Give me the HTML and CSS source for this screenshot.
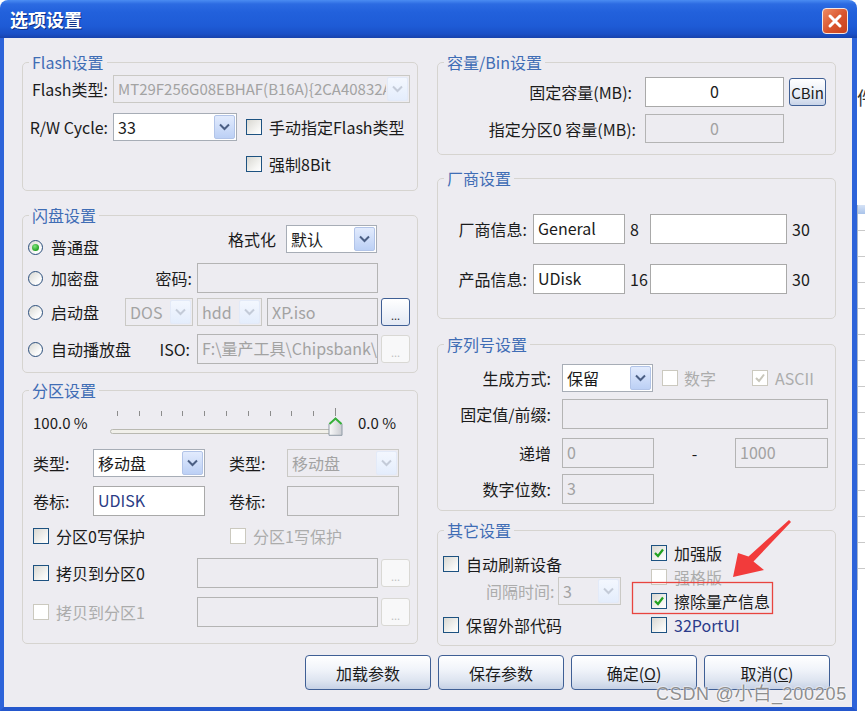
FILE: index.html
```html
<!DOCTYPE html>
<html lang="zh-CN">
<head>
    <meta charset="UTF-8">
    <title>选项设置</title>
    <link rel="stylesheet" href="styles.css">
</head>
<body>
    <div class="window">
        <div class="titlebar">
            <span class="title">选项设置</span>
            <span class="close">
                <svg width="24" height="24" viewBox="0 0 24 24"><path d="M7 7 L17 17 M17 7 L7 17" stroke="#fff" stroke-width="3" stroke-linecap="round"/></svg>
            </span>
        </div>
        <div class="client">
            <div class="panes">
                <div class="col left">
                    <fieldset class="grp flash">
                        <legend>Flash设置</legend>
                        <div class="row fl-r1">
                            <span class="lbl fl-lbl">Flash类型:</span>
                            <div class="combo off fl-type"><span class="val">MT29F256G08EBHAF(B16A){2CA40832A</span><span class="arrow"><svg width="11" height="8" viewBox="0 0 11 8"><polyline points="1,1.5 5.5,6 10,1.5" fill="none" stroke-width="2"/></svg></span></div>
                        </div>
                        <div class="row fl-r2">
                            <span class="lbl fl-lbl">R/W Cycle:</span>
                            <div class="combo fl-cycle"><span class="val">33</span><span class="arrow"><svg width="11" height="8" viewBox="0 0 11 8"><polyline points="1,1.5 5.5,6 10,1.5" fill="none" stroke-width="2"/></svg></span></div>
                            <label class="chk fl-manual"><span class="box"></span>手动指定Flash类型</label>
                        </div>
                        <div class="row fl-r3">
                            <label class="chk"><span class="box"></span>强制8Bit</label>
                        </div>
                    </fieldset>

                    <fieldset class="grp disk">
                        <legend>闪盘设置</legend>
                        <div class="row dk-r1">
                            <label class="opt dk-first"><span class="radio on"></span>普通盘</label>
                            <span class="lbl dk-fmt">格式化</span>
                            <div class="combo dk-fmtbox"><span class="val">默认</span><span class="arrow"><svg width="11" height="8" viewBox="0 0 11 8"><polyline points="1,1.5 5.5,6 10,1.5" fill="none" stroke-width="2"/></svg></span></div>
                        </div>
                        <div class="row dk-r2">
                            <label class="opt dk-wide"><span class="radio"></span>加密盘</label>
                            <span class="lbl dk-pwd">密码:</span>
                            <div class="field off dk-path"></div>
                        </div>
                        <div class="row dk-r3">
                            <label class="opt dk-boot"><span class="radio"></span>启动盘</label>
                            <div class="combo off dk-dos"><span class="val">DOS</span><span class="arrow"><svg width="11" height="8" viewBox="0 0 11 8"><polyline points="1,1.5 5.5,6 10,1.5" fill="none" stroke-width="2"/></svg></span></div>
                            <div class="combo off dk-hdd"><span class="val">hdd</span><span class="arrow"><svg width="11" height="8" viewBox="0 0 11 8"><polyline points="1,1.5 5.5,6 10,1.5" fill="none" stroke-width="2"/></svg></span></div>
                            <div class="field off dk-iso">XP.iso</div>
                            <span class="dots">...</span>
                        </div>
                        <div class="row dk-r4">
                            <label class="opt dk-wide"><span class="radio"></span>自动播放盘</label>
                            <span class="lbl dk-isolbl">ISO:</span>
                            <div class="field off dk-path">F:\量产工具\Chipsbank\C</div>
                            <span class="dots off">...</span>
                        </div>
                    </fieldset>

                    <fieldset class="grp part">
                        <legend>分区设置</legend>
                        <div class="row pt-slide">
                            <span class="pct">100.0 %</span>
                            <div class="slider">
                                <div class="ticks"><i></i><i></i><i></i><i></i><i></i><i></i><i></i><i></i><i></i><i></i><i class="end"></i></div>
                                <div class="track"></div>
                                <span class="thumb">
                                    <svg width="15" height="19" viewBox="0 0 15 19">
                                        <defs><linearGradient id="tg" x1="0" y1="0" x2="1" y2="0"><stop offset="0" stop-color="#fbfbfb"/><stop offset="1" stop-color="#c9cbd0"/></linearGradient></defs>
                                        <path d="M7.5 0.8 L14 6.8 V18.3 H1 V6.8 Z" fill="url(#tg)" stroke="#8f9aa6"/>
                                        <path d="M1.5 7 L7.5 1.5 L13.5 7" fill="none" stroke="#37b23a" stroke-width="2"/>
                                    </svg>
                                </span>
                            </div>
                            <span class="pct pct-end">0.0 %</span>
                        </div>
                        <div class="row pt-type">
                            <span class="pt-lbl">类型:</span>
                            <div class="combo pt-box"><span class="val">移动盘</span><span class="arrow"><svg width="11" height="8" viewBox="0 0 11 8"><polyline points="1,1.5 5.5,6 10,1.5" fill="none" stroke-width="2"/></svg></span></div>
                            <span class="pt-lbl pt-lbl2">类型:</span>
                            <div class="combo off pt-box"><span class="val">移动盘</span><span class="arrow"><svg width="11" height="8" viewBox="0 0 11 8"><polyline points="1,1.5 5.5,6 10,1.5" fill="none" stroke-width="2"/></svg></span></div>
                        </div>
                        <div class="row pt-vol">
                            <span class="pt-lbl">卷标:</span>
                            <div class="field pt-box udisk">UDISK</div>
                            <span class="pt-lbl pt-lbl2">卷标:</span>
                            <div class="field off pt-box"></div>
                        </div>
                        <div class="row pt-prot">
                            <label class="chk pt-p0"><span class="box"></span>分区0写保护</label>
                            <label class="chk off"><span class="box"></span>分区1写保护</label>
                        </div>
                        <div class="row pt-c0">
                            <label class="chk pt-copy"><span class="box"></span>拷贝到分区0</label>
                            <div class="field off dk-path"></div>
                            <span class="dots off">...</span>
                        </div>
                        <div class="row pt-c1">
                            <label class="chk off pt-copy"><span class="box"></span>拷贝到分区1</label>
                            <div class="field off dk-path"></div>
                            <span class="dots off">...</span>
                        </div>
                    </fieldset>
                </div>

                <div class="col right">
                    <fieldset class="grp cap">
                        <legend>容量/Bin设置</legend>
                        <div class="row cp-r1">
                            <span class="lbl cp-lbl1">固定容量(MB):</span>
                            <div class="field ctr cp-box">0</div>
                            <span class="mini">CBin</span>
                        </div>
                        <div class="row cp-r2">
                            <span class="lbl cp-lbl2">指定分区0 容量(MB):</span>
                            <div class="field off ctr cp-box">0</div>
                        </div>
                    </fieldset>

                    <fieldset class="grp vendor">
                        <legend>厂商设置</legend>
                        <div class="row vd-r1">
                            <span class="lbl vd-lbl">厂商信息:</span>
                            <div class="field vd-a">General</div>
                            <span class="cnt">8</span>
                            <div class="field vd-b"></div>
                            <span class="cnt">30</span>
                        </div>
                        <div class="row vd-r2">
                            <span class="lbl vd-lbl">产品信息:</span>
                            <div class="field vd-a">UDisk</div>
                            <span class="cnt">16</span>
                            <div class="field vd-b"></div>
                            <span class="cnt">30</span>
                        </div>
                    </fieldset>

                    <fieldset class="grp serial">
                        <legend>序列号设置</legend>
                        <div class="row sr-r1">
                            <span class="lbl sr-lbl">生成方式:</span>
                            <div class="combo sr-mode"><span class="val">保留</span><span class="arrow"><svg width="11" height="8" viewBox="0 0 11 8"><polyline points="1,1.5 5.5,6 10,1.5" fill="none" stroke-width="2"/></svg></span></div>
                            <label class="chk off sr-num"><span class="box"></span>数字</label>
                            <label class="chk off"><span class="box"><svg width="14" height="14" viewBox="0 0 14 14"><path d="M3 7 L6 10 L11 3.5" fill="none" stroke="#c8c6bb" stroke-width="2"/></svg></span>ASCII</label>
                        </div>
                        <div class="row sr-r2">
                            <span class="lbl sr-lbl">固定值/前缀:</span>
                            <div class="field off sr-long"></div>
                        </div>
                        <div class="row sr-r3">
                            <span class="lbl sr-lbl">递增</span>
                            <div class="field off sr-short">0</div>
                            <span class="dash">-</span>
                            <div class="field off sr-end">1000</div>
                        </div>
                        <div class="row sr-r4">
                            <span class="lbl sr-lbl">数字位数:</span>
                            <div class="field off sr-short">3</div>
                        </div>
                    </fieldset>

                    <fieldset class="grp other">
                        <legend>其它设置</legend>
                        <div class="ot-body">
                            <div class="ot-left">
                                <label class="chk ot-a"><span class="box"></span>自动刷新设备</label>
                                <div class="row ot-int">
                                    <span class="ot-lbl">间隔时间:</span>
                                    <div class="combo off ot-box"><span class="val">3</span><span class="arrow"><svg width="11" height="8" viewBox="0 0 11 8"><polyline points="1,1.5 5.5,6 10,1.5" fill="none" stroke-width="2"/></svg></span></div>
                                </div>
                                <label class="chk ot-c"><span class="box"></span>保留外部代码</label>
                            </div>
                            <div class="ot-right">
                                <label class="chk"><span class="box"><svg width="14" height="14" viewBox="0 0 14 14"><path d="M3 7 L6 10 L11 3.5" fill="none" stroke="#21a121" stroke-width="2.2"/></svg></span>加强版</label>
                                <label class="chk off"><span class="box"></span>强格版</label>
                                <label class="chk"><span class="box"><svg width="14" height="14" viewBox="0 0 14 14"><path d="M3 7 L6 10 L11 3.5" fill="none" stroke="#21a121" stroke-width="2.2"/></svg></span>擦除量产信息</label>
                                <label class="chk port"><span class="box"></span>32PortUI</label>
                            </div>
                        </div>
                    </fieldset>
                </div>
            </div>

            <div class="buttons">
                <button class="btn">加载参数</button>
                <button class="btn">保存参数</button>
                <button class="btn">确定(<u>O</u>)</button>
                <button class="btn">取消(<u>C</u>)</button>
            </div>
        </div>

        <!-- annotation drawn over the screenshot -->
        <svg class="mark" width="180" height="110" viewBox="0 0 180 110">
            <rect x="12.5" y="72.5" width="140" height="31" fill="none" stroke="#e8443f" stroke-width="1.3"/>
            <polygon points="113,67 118,43 128.5,46.5 169,10 171,12 133.5,51.5 144,60" fill="#f23b3b"/>
        </svg>
        <span class="watermark">CSDN @小白_200205</span>
    </div>

    <div class="behind">
        <span class="peek">件</span>
        <div class="peek-table"></div>
    </div>
</body>
</html>
```

FILE: styles.css
```css
* {
    box-sizing: border-box;
}

body {
    margin: 0;
    width: 865px;
    height: 711px;
    overflow: hidden;
    display: flex;
    background-color: #fff;
    font-family: "Noto Sans CJK SC", "Liberation Sans", sans-serif;
    font-size: 16px;
    color: #1b1b1b;
}

.window {
    position: relative;
    flex: none;
    width: 857px;
    height: 711px;
    display: flex;
    flex-direction: column;
}

.titlebar {
    flex: none;
    height: 38px;
    display: flex;
    justify-content: space-between;
    align-items: flex-start;
    padding: 0 9px 0 10px;
    border-radius: 8px 8px 0 0;
    background: linear-gradient(#4a8cf2 0, #2c6be2 4px, #2261dc 12px, #1e5bd6 26px, #1a4fc6 34px, #1742ac 38px);
}

.title {
    margin-top: 8px;
    line-height: 22px;
    font-size: 18px;
    font-weight: bold;
    color: #fff;
    text-shadow: 1px 1px 0 #0c2f86;
}

.close {
    margin-top: 8px;
    width: 26px;
    height: 26px;
    display: flex;
    align-items: center;
    justify-content: center;
    border: 1px solid #f4e6e2;
    border-radius: 4px;
    background: linear-gradient(135deg, #ee8a62, #d9532c 55%, #c9421f);
}

.client {
    flex: 1;
    display: flex;
    flex-direction: column;
    padding: 14px 16px 0 18px;
    background-color: #edecf1;
    border-left: 4px solid #2d63d9;
    border-right: 5px solid #2d63d9;
    border-bottom: 4px solid #2457cc;
}

.panes {
    display: flex;
    gap: 19px;
}

.col {
    display: flex;
    flex-direction: column;
}

.col.left {
    width: 396px;
}

.col.right {
    width: 399px;
}

/* group boxes */
.grp {
    margin: 0;
    padding: 0;
    min-width: 0;
    border: 1px solid #d6d4d0;
    border-radius: 5px;
}

.grp legend {
    margin-left: 6px;
    padding: 0 3px;
    line-height: 20px;
    color: #3f6db5;
}

.flash { height: 139px; }
.disk { height: 168px; margin-top: 14px; }
.part { height: 264px; margin-top: 7px; }
.cap { height: 103px; }
.vendor { height: 151px; margin-top: 13px; }
.serial { height: 177px; margin-top: 15px; }
.other { height: 126px; margin-top: 9px; }

.row {
    display: flex;
    align-items: center;
}

.lbl {
    flex: none;
    text-align: right;
    white-space: nowrap;
    line-height: 20px;
}

/* controls */
.combo {
    flex: none;
    display: flex;
    height: 28px;
    background-color: #fff;
    border: 1px solid #a7adb6;
}

.combo .val {
    flex: 1;
    overflow: hidden;
    white-space: nowrap;
    padding-left: 4px;
    line-height: 26px;
}

.combo .arrow {
    flex: none;
    width: 21px;
    margin: 1px;
    display: flex;
    align-items: center;
    justify-content: center;
    border: 1px solid #b2c4e8;
    border-radius: 2px;
    background: linear-gradient(#e2ebfd, #bcd0f5);
}

.combo .arrow svg {
    stroke: #4b5f84;
}

.combo.off {
    background-color: #edecf1;
    border-color: #cac9c5;
    color: #a3a3a3;
}

.combo.off .arrow {
    border-color: #e3eaf8;
    background: linear-gradient(#f3f7fe, #e4edfc);
}

.combo.off .arrow svg {
    stroke: #c4cbd8;
}

.field {
    flex: none;
    height: 30px;
    padding-left: 4px;
    line-height: 26px;
    white-space: nowrap;
    overflow: hidden;
    background-color: #fff;
    border: 1px solid #a9a9a9;
}

.field.off {
    background-color: #edecf1;
    border-color: #b4b4b4;
    color: #a2a2a2;
}

.field.ctr {
    text-align: center;
    padding-left: 0;
}

.dots {
    flex: none;
    width: 29px;
    height: 28px;
    margin-left: 3px;
    display: flex;
    align-items: flex-end;
    justify-content: center;
    padding-bottom: 5px;
    font-size: 11px;
    line-height: 10px;
    border: 1px solid #3f5f95;
    border-radius: 3px;
    background: linear-gradient(#ffffff, #e3e9f4);
    color: #333;
}

.dots.off {
    border-color: #d9d8d4;
    background: #f8f8f9;
    color: #c2c2c2;
}

.chk,
.opt {
    flex: none;
    display: flex;
    align-items: center;
    gap: 7px;
    white-space: nowrap;
    line-height: 20px;
}

.chk .box {
    flex: none;
    width: 16px;
    height: 16px;
    display: flex;
    align-items: center;
    justify-content: center;
    border: 1px solid #1d5281;
    background: linear-gradient(135deg, #d9d8d2, #f6f6f4 70%, #fff);
}

.chk.off {
    color: #acacac;
}

.chk.off .box {
    border-color: #cbc9bf;
    background: #fff;
}

.radio {
    position: relative;
    flex: none;
    width: 15px;
    height: 15px;
    border-radius: 50%;
    border: 1px solid #2c4f7c;
    background: linear-gradient(135deg, #d8d8d2, #fbfbfb 70%);
}

.radio.on::after {
    content: "";
    position: absolute;
    left: 3px;
    top: 3px;
    width: 7px;
    height: 7px;
    border-radius: 50%;
    background: radial-gradient(circle at 40% 35%, #7fe47f, #21a121 70%);
}

.btn {
    width: 126px;
    height: 35px;
    padding: 0;
    font-family: inherit;
    font-size: 16px;
    color: #1b1b1b;
    border: 1px solid #3f5f95;
    border-radius: 4px;
    background: linear-gradient(#ffffff, #f1f4fa 40%, #dde4f0 75%, #c6d1e5);
}

.btn u {
    text-decoration: underline;
}

.mini {
    flex: none;
    width: 37px;
    height: 28px;
    margin-left: 5px;
    display: flex;
    align-items: center;
    justify-content: center;
    font-size: 15px;
    border: 1px solid #3f5f95;
    border-radius: 3px;
    background: linear-gradient(#ffffff, #e6ecf6 60%, #c9d4e8);
}

/* Flash设置 */
.fl-r1 { margin-top: 3px; height: 28px; }
.fl-r2 { margin-top: 10px; height: 28px; }
.fl-r3 { margin-top: 9px; height: 28px; padding-left: 223px; }
.fl-lbl { width: 85px; margin-right: 5px; }
.fl-type { width: 297px; }
.fl-type .val { font-size: 15px; }
.fl-cycle { width: 124px; }
.fl-manual { margin-left: 9px; }

/* 闪盘设置 */
.dk-r1 { height: 28px; }
.dk-r2 { margin-top: 10px; height: 30px; }
.dk-r3 { margin-top: 5px; height: 28px; }
.dk-r4 { margin-top: 8px; height: 30px; }
.opt { margin-left: 5px; gap: 8px; }
.dk-first { width: 200px; align-self: flex-end; margin-bottom: -4px; }
.dk-wide { width: 127px; }
.dk-boot { width: 97px; }
.dk-fmt { width: 48px; margin-right: 10px; }
.dk-fmtbox { width: 91px; }
.dk-pwd { width: 37px; margin-right: 5px; }
.dk-isolbl { width: 35px; margin-right: 7px; }
.dk-path { width: 181px; }
.dk-dos { width: 68px; }
.dk-hdd { width: 65px; margin-left: 4px; }
.dk-iso { width: 111px; height: 28px; margin-left: 5px; }

/* 分区设置 */
.pt-slide { margin-top: 5px; height: 36px; padding-left: 10px; }
.pt-type { margin-top: 8px; height: 28px; padding-left: 10px; }
.pt-vol { margin-top: 9px; height: 30px; padding-left: 10px; }
.pt-prot { margin-top: 8px; height: 24px; padding-left: 10px; }
.pt-c0 { margin-top: 10px; height: 30px; padding-left: 10px; }
.pt-c1 { margin-top: 9px; height: 30px; padding-left: 10px; }

.pct {
    width: 75px;
    font-size: 15px;
    line-height: 20px;
}

.pct-end {
    width: auto;
    margin-left: 13px;
}

.slider {
    position: relative;
    flex: none;
    width: 237px;
    height: 36px;
    padding-top: 5px;
}

.ticks {
    display: flex;
    justify-content: space-between;
    align-items: flex-end;
    height: 6px;
    padding: 0 9px;
}

.ticks i {
    width: 1px;
    height: 5px;
    background-color: #8c8c8c;
}

.ticks i.end {
    height: 8px;
    margin-top: -3px;
}

.track {
    width: 222px;
    height: 5px;
    margin: 13px 0 0 2px;
    border: 1px solid #b9b9b1;
    border-radius: 3px;
    background-color: #f1f0ea;
}

.thumb {
    position: absolute;
    left: 220px;
    top: 12px;
    display: block;
    line-height: 0;
}

.pt-lbl {
    width: 60px;
    line-height: 20px;
}

.pt-lbl2 {
    width: 58px;
    margin-left: 24px;
}

.pt-box { width: 112px; }
.udisk { color: #2a3c86; }
.pt-p0 { width: 197px; }
.pt-copy { width: 164px; }

/* 容量/Bin设置 */
.cp-r1 { margin-top: 5px; height: 30px; }
.cp-r2 { margin-top: 7px; height: 29px; }
.cp-lbl1 { width: 194px; margin-right: 13px; }
.cp-lbl2 { width: 198px; margin-right: 9px; }
.cp-box { width: 139px; }
.cp-r2 .cp-box { height: 29px; }

/* 厂商设置 */
.vd-r1 { margin-top: 26px; height: 30px; }
.vd-r2 { margin-top: 20px; height: 30px; }
.vd-lbl { width: 95px; padding-right: 6px; }
.vd-a { width: 92px; }
.vd-b { width: 137px; }

.cnt {
    width: 20px;
    margin-left: 5px;
    line-height: 20px;
}

/* 序列号设置 */
.sr-r1 { margin-top: 10px; height: 28px; }
.sr-r2 { margin-top: 7px; height: 30px; }
.sr-r3 { margin-top: 9px; height: 30px; }
.sr-r4 { margin-top: 6px; height: 30px; }
.sr-lbl { width: 113px; margin-right: 11px; }
.sr-mode { width: 91px; }
.sr-num { width: 90px; margin-left: 9px; gap: 6px; }
.sr-long { width: 266px; }
.sr-short { width: 92px; }
.sr-end { width: 93px; }

.dash {
    width: 81px;
    text-align: center;
}

/* 其它设置 */
.ot-body {
    display: flex;
}

.ot-left {
    width: 213px;
    padding-left: 5px;
}

.ot-left .chk,
.ot-right .chk {
    height: 24px;
}

.ot-a { margin-top: 12px; }
.ot-int { margin-top: 1px; height: 28px; padding-left: 43px; }
.ot-c { margin-top: 8px; }

.ot-lbl {
    width: 72px;
    color: #acacac;
    line-height: 20px;
}

.ot-box { width: 63px; }

.ot-right {
    margin-top: 1px;
}

.port { color: #2b3b8a; }

.buttons {
    display: flex;
    justify-content: flex-end;
    gap: 7px;
    margin-top: 9px;
    padding-right: 6px;
}

/* overlays on the screenshot */
.mark {
    position: absolute;
    left: 620px;
    top: 510px;
}

.watermark {
    position: absolute;
    left: 656px;
    top: 684px;
    font-family: "Liberation Sans", "Noto Sans CJK SC", sans-serif;
    font-size: 18px;
    line-height: 20px;
    letter-spacing: 0.7px;
    color: #8e8e8e;
    text-shadow: 0 0 2px #fff, 0 0 2px #fff;
}

/* window behind the dialog */
.behind {
    flex: 1;
    overflow: hidden;
    background-color: #fff;
}

.peek {
    display: block;
    margin-top: 87px;
    font-size: 18px;
    line-height: 20px;
    color: #333;
}

.peek-table {
    margin-top: 98px;
    height: 385px;
    border-left: 1px solid #a9b7cc;
    background:
        linear-gradient(#d6e3f6, #a9c3ea) top / 100% 9px no-repeat,
        repeating-linear-gradient(#fff 0 25px, #c9c9c9 25px 26px);
}
```
